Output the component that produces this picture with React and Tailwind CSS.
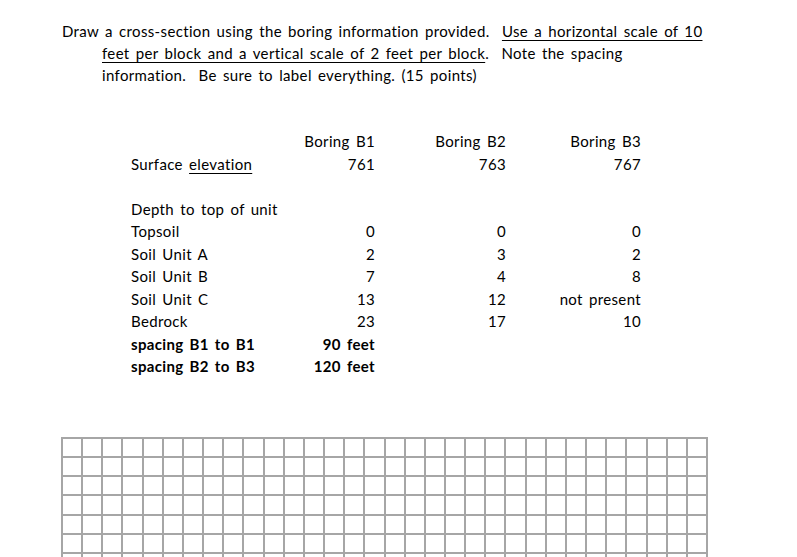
import React from 'react';

const ROWS = [
  { label: '', b1: 'Boring B1', b2: 'Boring B2', b3: 'Boring B3' },
  { label: 'surface', b1: '761', b2: '763', b3: '767' },
  { label: '', b1: '', b2: '', b3: '' },
  { label: 'Depth to top of unit', b1: '', b2: '', b3: '' },
  { label: 'Topsoil', b1: '0', b2: '0', b3: '0' },
  { label: 'Soil Unit A', b1: '2', b2: '3', b3: '2' },
  { label: 'Soil Unit B', b1: '7', b2: '4', b3: '8' },
  { label: 'Soil Unit C', b1: '13', b2: '12', b3: 'not present' },
  { label: 'Bedrock', b1: '23', b2: '17', b3: '10' },
  { label: 'spacing B1 to B1', b1: '90 feet', b2: '', b3: '', bold: true },
  { label: 'spacing B2 to B3', b1: '120 feet', b2: '', b3: '', bold: true },
];

// graph paper at the bottom
const COLS = 32;
const GRID_ROWS = 7;

export default function App() {
  return (
    <div className="h-[557px] w-[797px] overflow-hidden bg-white text-black font-['Lato','Liberation_Sans',sans-serif] text-[15px] tracking-[0.35px] [word-spacing:2px]">
      {/* Consigne */}
      <div className="pt-[20px] pl-[62px] leading-[22px] whitespace-nowrap">
        <div>
          Draw a cross-section using the boring information provided.{'\u00a0 '}
          <span className="underline underline-offset-[3px]">Use a horizontal scale of 10</span>
        </div>
        <div className="pl-[40px]">
          <span className="underline underline-offset-[3px]">feet per block and a vertical scale of 2 feet per block</span>
          .{'\u00a0 '}Note the spacing
        </div>
        <div className="pl-[40px]">
          information.{'\u00a0 '}Be sure to label everything. (15 points)
        </div>
      </div>

      {/* Tableau des forages */}
      <div className="mt-[44px] ml-[131px] grid grid-cols-[170px_74px_131px_135px] auto-rows-[22.5px] items-center whitespace-nowrap">
        {ROWS.map((r, i) => (
          <React.Fragment key={i}>
            <div className={r.bold ? 'font-bold' : ''}>
              {r.label === 'surface' ? (
                <>
                  Surface <span className="underline underline-offset-[3px]">elevation</span>
                </>
              ) : (
                r.label
              )}
            </div>
            <div className={`text-right ${r.bold ? 'font-bold' : ''}`}>{r.b1}</div>
            <div className="text-right">{r.b2}</div>
            <div className="text-right">{r.b3}</div>
          </React.Fragment>
        ))}
      </div>

      {/* Papier quadrillé */}
      <div className="mt-[59px] ml-[61px] w-[647px] grid grid-cols-[repeat(32,1fr)] auto-rows-[17.3px] gap-[2px] p-[2px] bg-[#a6a6a6]">
        {Array.from({ length: COLS * GRID_ROWS }).map((_, i) => (
          <div key={i} className="bg-white" />
        ))}
      </div>
    </div>
  );
}
